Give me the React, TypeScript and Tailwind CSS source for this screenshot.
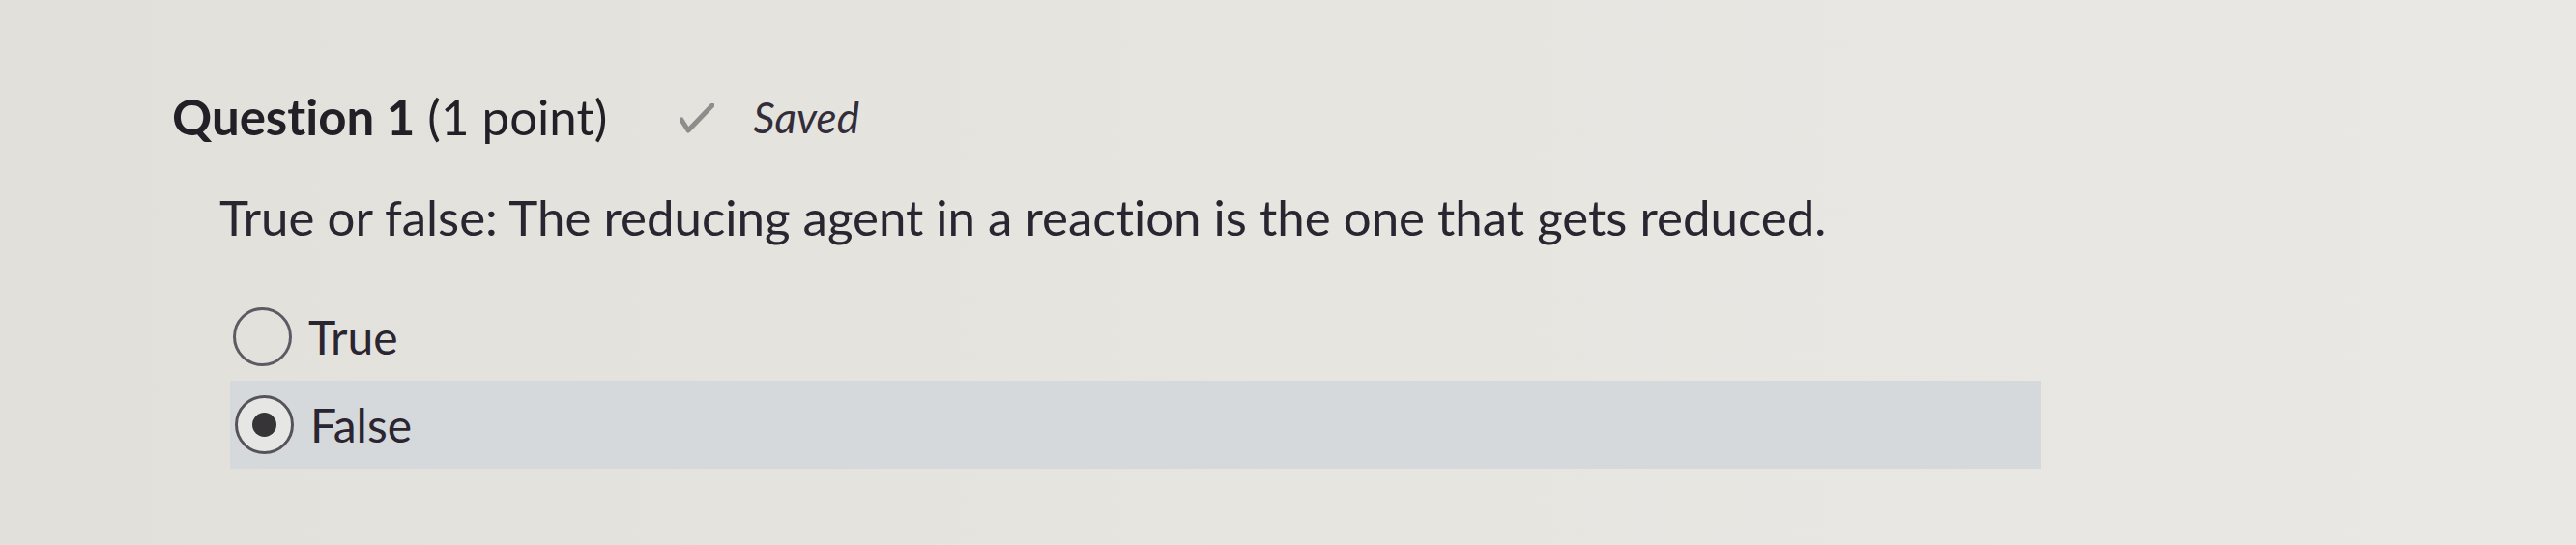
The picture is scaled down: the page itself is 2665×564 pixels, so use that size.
import React from "react";

function CheckMark() {
  return (
    <svg width="36" height="32" viewBox="0 0 36 32" fill="none" className="shrink-0">
      <path
        d="M2 17 L9 28 L34 2"
        stroke="#8e8d8c"
        strokeWidth="5"
        strokeLinecap="round"
        strokeLinejoin="round"
      />
    </svg>
  );
}

function Radio({ checked }: { checked: boolean }) {
  return (
    <span
      className={
        checked
          ? "flex h-[61px] w-[61px] shrink-0 items-center justify-center rounded-full border-[3px] border-[#56525b] bg-[#e6e6e4]"
          : "flex h-[61px] w-[61px] shrink-0 items-center justify-center rounded-full border-[3px] border-[#5e5a63] bg-transparent"
      }
    >
      {checked && <span className="h-[25px] w-[25px] rounded-full bg-[#363437]" />}
    </span>
  );
}

const options = [
  { label: "True", checked: false },
  { label: "False", checked: true },
];

export default function App() {
  return (
    <div
      className="h-[564px] w-[2665px] overflow-hidden bg-gradient-to-r from-[#e1e0db] via-[#e6e5e0] to-[#e9e8e4] text-[#2a2530] [font-variant-ligatures:none]"
      style={{ fontFamily: "Lato, 'Open Sans', sans-serif" }}
    >
      <div className="flex flex-col pl-[178px]">
        <div className="mt-[95px] flex h-[51px] items-center leading-none">
          <h2 className="text-[51px] leading-none text-[#231f27]">
            <span className="font-bold">Question 1</span>
            <span className="font-normal"> (1 point)</span>
          </h2>
          <span className="ml-[75px] mt-[4px]">
            <CheckMark />
          </span>
          <span className="ml-[40px] text-[44px] italic leading-none text-[#332d3a]">Saved</span>
        </div>

        <p className="ml-[49px] mt-[53px] h-[51px] text-[51px] leading-none">
          True or false: The reducing agent in a reaction is the one that gets reduced.
        </p>

        <div className="ml-[60px] mt-[53px] flex w-[1874px] flex-col">
          {options.map((o) => (
            <label
              key={o.label}
              className={
                o.checked
                  ? "flex h-[91px] items-center gap-[17px] bg-[#d5d9db] pl-[5px]"
                  : "flex h-[91px] items-center gap-[17px] pl-[3px]"
              }
            >
              <Radio checked={o.checked} />
              <span className="text-[48px] leading-none">{o.label}</span>
            </label>
          ))}
        </div>
      </div>
    </div>
  );
}
